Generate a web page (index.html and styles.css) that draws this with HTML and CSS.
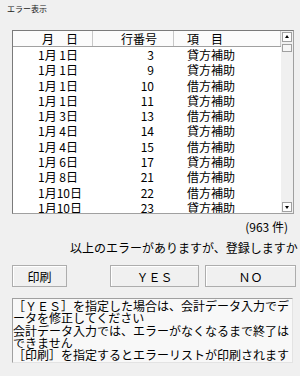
FILE: index.html
```html
<!DOCTYPE html>
<html lang="ja">
<head>
    <meta charset="UTF-8">
    <meta name="viewport" content="width=device-width, initial-scale=1.0">
    <title>エラー表示</title>
    <link rel="stylesheet" href="styles.css">
</head>
<body>
    <div class="dialog">
        <div class="caption">エラー表示</div>

        <!-- エラー一覧 -->
        <div class="listbox">
            <div class="grid">
                <div class="grid-head">
                    <div class="col-date">月　日</div>
                    <div class="col-no">行番号</div>
                    <div class="col-item">項　目</div>
                </div>
                <div class="grid-body">
                    <div class="row"><div class="col-date">1月 1日</div><div class="col-no">3</div><div class="col-item">貸方補助</div></div>
                    <div class="row"><div class="col-date">1月 1日</div><div class="col-no">9</div><div class="col-item">貸方補助</div></div>
                    <div class="row"><div class="col-date">1月 1日</div><div class="col-no">10</div><div class="col-item">借方補助</div></div>
                    <div class="row"><div class="col-date">1月 1日</div><div class="col-no">11</div><div class="col-item">貸方補助</div></div>
                    <div class="row"><div class="col-date">1月 3日</div><div class="col-no">13</div><div class="col-item">借方補助</div></div>
                    <div class="row"><div class="col-date">1月 4日</div><div class="col-no">14</div><div class="col-item">貸方補助</div></div>
                    <div class="row"><div class="col-date">1月 4日</div><div class="col-no">15</div><div class="col-item">借方補助</div></div>
                    <div class="row"><div class="col-date">1月 6日</div><div class="col-no">17</div><div class="col-item">貸方補助</div></div>
                    <div class="row"><div class="col-date">1月 8日</div><div class="col-no">21</div><div class="col-item">借方補助</div></div>
                    <div class="row"><div class="col-date">1月10日</div><div class="col-no">22</div><div class="col-item">借方補助</div></div>
                    <div class="row"><div class="col-date">1月10日</div><div class="col-no">23</div><div class="col-item">貸方補助</div></div>
                </div>
            </div>
            <div class="vscroll">
                <div class="sb-btn sb-up"></div>
                <div class="sb-thumb"></div>
                <div class="sb-track"></div>
                <div class="sb-btn sb-down"></div>
            </div>
        </div>

        <div class="count">(963 件)</div>
        <div class="question">以上のエラーがありますが、登録しますか</div>

        <div class="buttons">
            <button type="button" class="btn btn-print">印刷</button>
            <button type="button" class="btn btn-yes">ＹＥＳ</button>
            <button type="button" class="btn btn-no">ＮＯ</button>
        </div>

        <!-- 説明 -->
        <div class="note">
            <div class="note-line">［ＹＥＳ］を指定した場合は、会計データ入力でデ</div>
            <div class="note-line">ータを修正してください</div>
            <div class="note-line">会計データ入力では、エラーがなくなるまで終了は</div>
            <div class="note-line">できません</div>
            <div class="note-line">［印刷］を指定するとエラーリストが印刷されます</div>
        </div>
    </div>
</body>
</html>
```

FILE: styles.css
```css
* {
    margin: 0;
    padding: 0;
    box-sizing: border-box;
}

body {
    font-family: 'Noto Sans CJK JP', 'Noto Sans', sans-serif;
    font-size: 12px;
    color: #000;
    background-color: #f0f0f0;
}

.dialog {
    width: 300px;
    height: 376px;
}

.caption {
    height: 30px;
    padding: 4px 0 0 7px;
    font-size: 8px;
    line-height: 10px;
    color: #222;
}

/* 一覧 */
.listbox {
    display: flex;
    width: 282px;
    height: 184px;
    margin-left: 12px;
    background: #fff;
    border: 1px solid;
    border-color: #7a7a7a #a0a0a0 #a0a0a0 #7a7a7a;
}

.grid {
    flex: 1;
    display: flex;
    flex-direction: column;
    overflow: hidden;
}

.grid-head,
.row {
    display: grid;
    grid-template-columns: 80px 81px 1fr;
    white-space: pre;
}

.grid-head {
    height: 16px;
    line-height: 15px;
    background: #fbfbfb;
    border-bottom: 1px solid #a0a0a0;
}

    .grid-head > div {
        border-right: 1px solid #c8c8c8;
    }

    .grid-head .col-date {
        text-align: right;
        padding-right: 14px;
    }

    .grid-head .col-no {
        text-align: right;
        padding-right: 16px;
    }

    .grid-head .col-item {
        padding-left: 13px;
    }

.grid-body {
    flex: 1;
    overflow: hidden;
}

.row {
    height: 15.3px;
    line-height: 15.3px;
}

    .row .col-date {
        padding-left: 25px;
    }

    .row .col-no {
        text-align: right;
        padding-right: 20px;
    }

    .row .col-item {
        padding-left: 13px;
    }

/* スクロールバー */
.vscroll {
    width: 12px;
    display: flex;
    flex-direction: column;
    background: #f0f0f0;
    padding: 1px 0;
}

.sb-btn,
.sb-thumb {
    height: 10px;
    margin: 0 1px;
    background: #fdfdfd;
    border: 1px solid #a0a0a0;
    position: relative;
}

.sb-thumb {
    height: 8px;
    margin-top: 2px;
    background: #f6f6f6;
}

.sb-track {
    flex: 1;
}

.sb-btn::after {
    content: "";
    position: absolute;
    left: 2px;
    top: 2px;
    border-left: 2.5px solid transparent;
    border-right: 2.5px solid transparent;
}

.sb-up::after {
    border-bottom: 3px solid #000;
}

.sb-down::after {
    top: 3px;
    border-top: 3px solid #000;
}

.count {
    margin-top: 6px;
    line-height: 14px;
    text-align: right;
    padding-right: 12px;
    white-space: pre;
}

.question {
    margin-top: 7px;
    line-height: 14px;
    padding-left: 70px;
    white-space: nowrap;
}

/* ボタン */
.buttons {
    display: flex;
    margin-top: 10px;
    height: 22px;
}

.btn {
    height: 22px;
    font-family: inherit;
    font-size: 12px;
    color: #000;
    background: #f0f0f0;
    border: 1px solid #adadad;
    box-shadow: inset 1px 1px 0 #fff;
}

.btn-print {
    width: 55px;
    margin-left: 12px;
}

.btn-yes {
    width: 89px;
    margin-left: 43px;
}

.btn-no {
    width: 91px;
    margin-left: 6px;
}

/* 説明 */
.note {
    width: 281px;
    height: 65px;
    margin: 11px 0 0 12px;
    padding: 1px 0 0 0;
    background: #f8f8f8;
    border: 1px solid;
    border-color: #a0a0a0 #e3e3e3 #e3e3e3 #a0a0a0;
}

.note-line {
    line-height: 12.3px;
    white-space: nowrap;
}
```
